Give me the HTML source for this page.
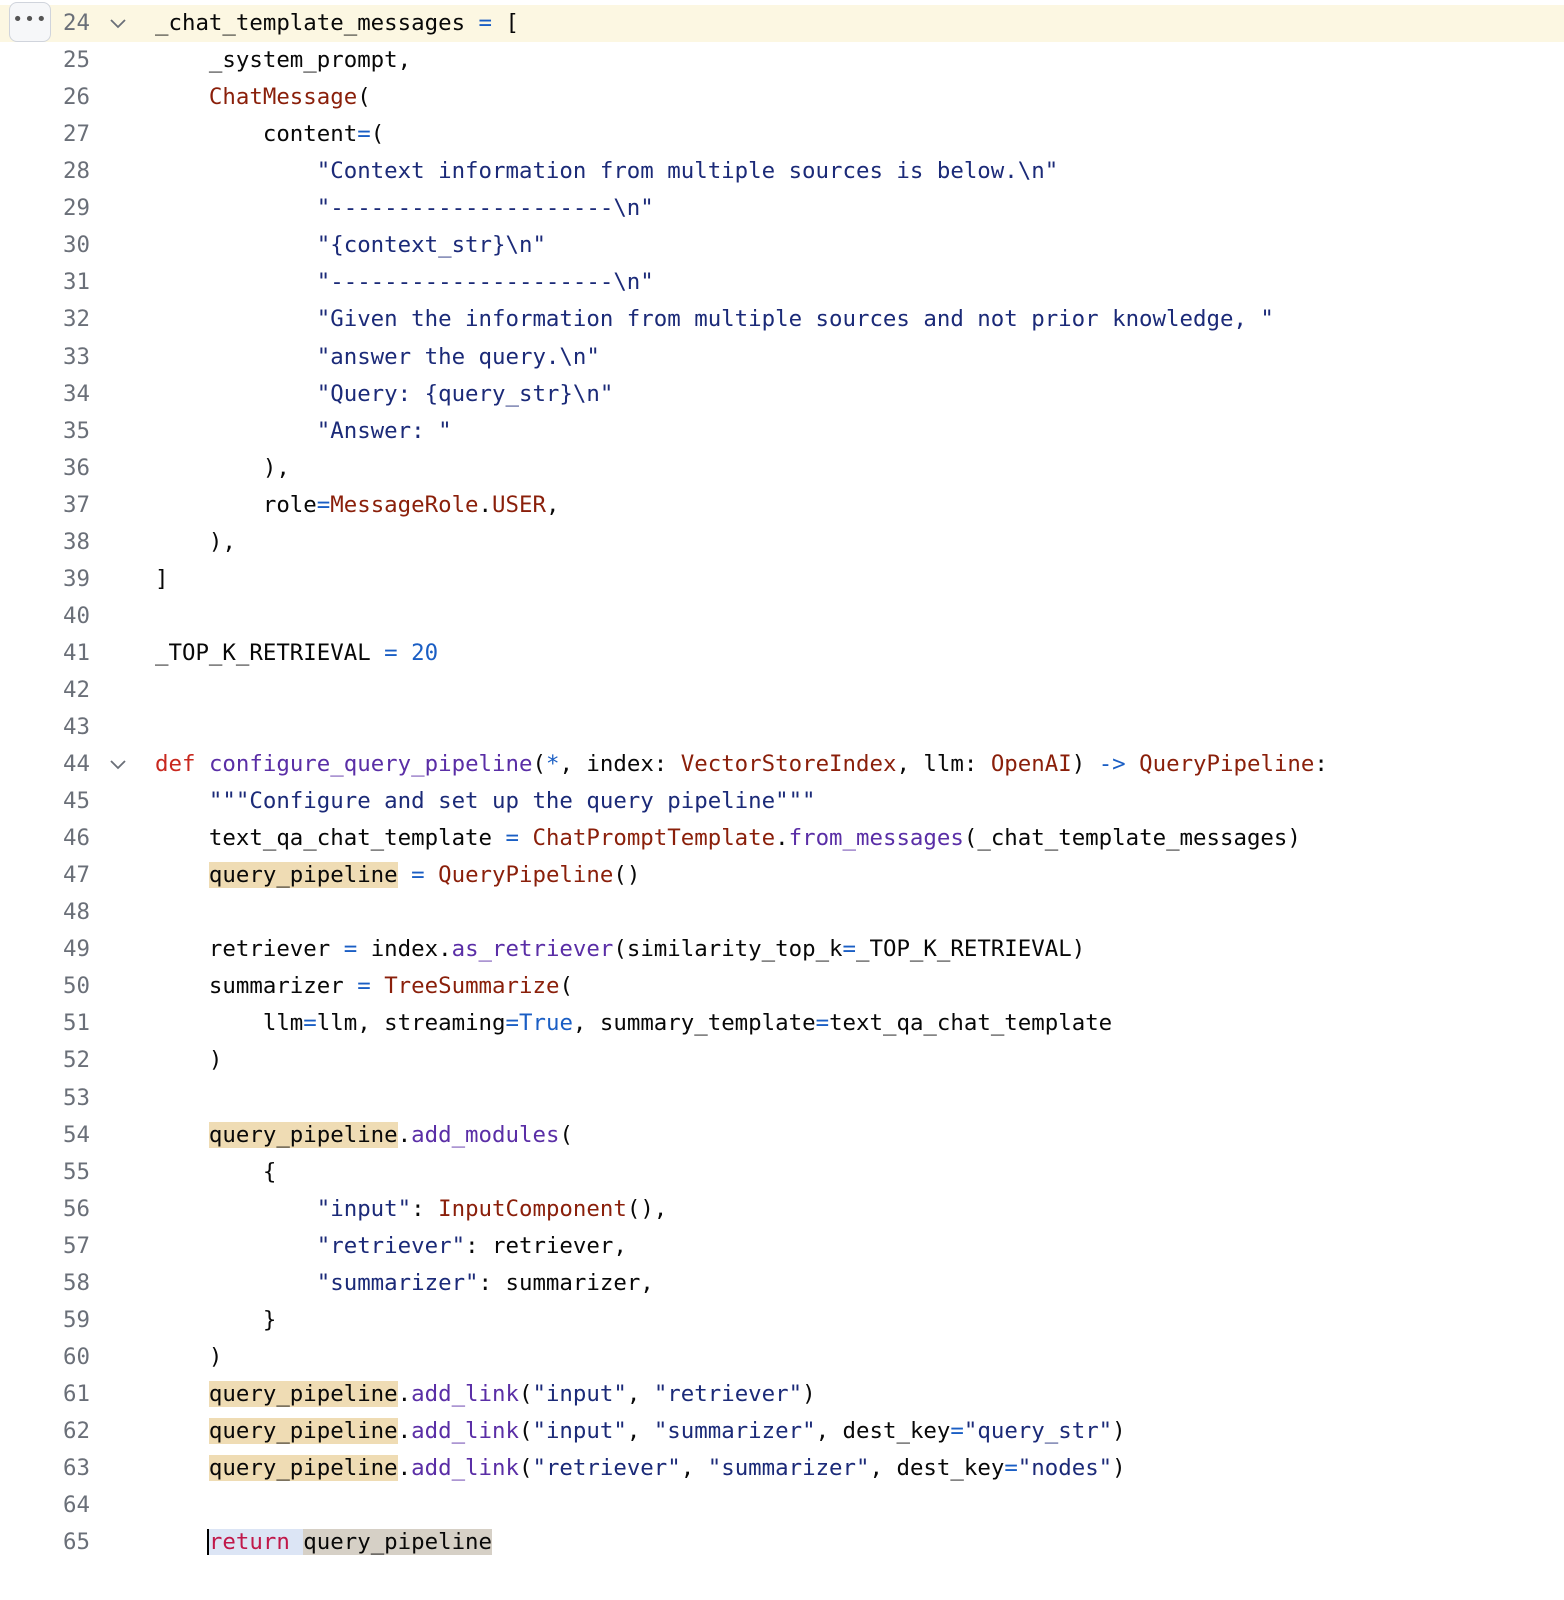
<!DOCTYPE html>
<html><head><meta charset="utf-8"><style>
body{margin:0;width:1564px;height:1600px;background:#fff;overflow:hidden;position:relative;font-family:"DejaVu Sans Mono","Liberation Mono",monospace;font-size:22.4px;color:#080808}
.l{position:absolute;left:0;width:1564px;height:37px;line-height:37px;white-space:pre}
.n{position:absolute;left:40px;width:50px;text-align:right;color:#6a6f78}
.c{position:absolute;left:155px}
.k{color:#c8281e}.t{color:#8a1f0a}.s{color:#1b2a78}.f{color:#5a2ea6}.o{color:#1a5ec4}.h{background:#efdcb4}
.chev{position:absolute;left:109px;top:12px;width:18px;height:12px}
</style></head><body>
<div style="position:absolute;left:0;top:5px;width:1564px;height:37px;background:#fcf7e2"></div>
<div style="position:absolute;left:9px;top:2px;width:42px;height:40px;border:1.5px solid #d0d4dc;border-radius:8px;background:#f6f7f9;box-sizing:border-box;color:#555;font-size:18px;line-height:34px;text-align:center;letter-spacing:1px">•••</div>
<div class="l" style="top:5px"><span class="n">24</span><svg class="chev" viewBox="0 0 18 12"><path d="M2 3 L9 10 L16 3" fill="none" stroke="#6a6f78" stroke-width="1.8"/></svg><span class="c">_chat_template_messages <span class="o">=</span> [</span></div>
<div class="l" style="top:42px"><span class="n">25</span><span class="c">    _system_prompt,</span></div>
<div class="l" style="top:79px"><span class="n">26</span><span class="c">    <span class="t">ChatMessage</span>(</span></div>
<div class="l" style="top:116px"><span class="n">27</span><span class="c">        content<span class="o">=</span>(</span></div>
<div class="l" style="top:153px"><span class="n">28</span><span class="c s">            "Context information from multiple sources is below.\n"</span></div>
<div class="l" style="top:190px"><span class="n">29</span><span class="c s">            "---------------------\n"</span></div>
<div class="l" style="top:227px"><span class="n">30</span><span class="c s">            "{context_str}\n"</span></div>
<div class="l" style="top:264px"><span class="n">31</span><span class="c s">            "---------------------\n"</span></div>
<div class="l" style="top:301px"><span class="n">32</span><span class="c s">            "Given the information from multiple sources and not prior knowledge, "</span></div>
<div class="l" style="top:339px"><span class="n">33</span><span class="c s">            "answer the query.\n"</span></div>
<div class="l" style="top:376px"><span class="n">34</span><span class="c s">            "Query: {query_str}\n"</span></div>
<div class="l" style="top:413px"><span class="n">35</span><span class="c s">            "Answer: "</span></div>
<div class="l" style="top:450px"><span class="n">36</span><span class="c">        ),</span></div>
<div class="l" style="top:487px"><span class="n">37</span><span class="c">        role<span class="o">=</span><span class="t">MessageRole</span>.<span class="t">USER</span>,</span></div>
<div class="l" style="top:524px"><span class="n">38</span><span class="c">    ),</span></div>
<div class="l" style="top:561px"><span class="n">39</span><span class="c">]</span></div>
<div class="l" style="top:598px"><span class="n">40</span></div>
<div class="l" style="top:635px"><span class="n">41</span><span class="c">_TOP_K_RETRIEVAL <span class="o">=</span> <span class="o">20</span></span></div>
<div class="l" style="top:672px"><span class="n">42</span></div>
<div class="l" style="top:709px"><span class="n">43</span></div>
<div class="l" style="top:746px"><span class="n">44</span><svg class="chev" viewBox="0 0 18 12"><path d="M2 3 L9 10 L16 3" fill="none" stroke="#6a6f78" stroke-width="1.8"/></svg><span class="c"><span class="k">def</span> <span class="f">configure_query_pipeline</span>(<span class="o">*</span>, index: <span class="t">VectorStoreIndex</span>, llm: <span class="t">OpenAI</span>) <span class="o">-&gt;</span> <span class="t">QueryPipeline</span>:</span></div>
<div class="l" style="top:783px"><span class="n">45</span><span class="c s">    """Configure and set up the query pipeline"""</span></div>
<div class="l" style="top:820px"><span class="n">46</span><span class="c">    text_qa_chat_template <span class="o">=</span> <span class="t">ChatPromptTemplate</span>.<span class="f">from_messages</span>(_chat_template_messages)</span></div>
<div class="l" style="top:857px"><span class="n">47</span><span class="c">    <span class="h">query_pipeline</span> <span class="o">=</span> <span class="t">QueryPipeline</span>()</span></div>
<div class="l" style="top:894px"><span class="n">48</span></div>
<div class="l" style="top:931px"><span class="n">49</span><span class="c">    retriever <span class="o">=</span> index.<span class="f">as_retriever</span>(similarity_top_k<span class="o">=</span>_TOP_K_RETRIEVAL)</span></div>
<div class="l" style="top:968px"><span class="n">50</span><span class="c">    summarizer <span class="o">=</span> <span class="t">TreeSummarize</span>(</span></div>
<div class="l" style="top:1005px"><span class="n">51</span><span class="c">        llm<span class="o">=</span>llm, streaming<span class="o">=</span><span class="o">True</span>, summary_template<span class="o">=</span>text_qa_chat_template</span></div>
<div class="l" style="top:1042px"><span class="n">52</span><span class="c">    )</span></div>
<div class="l" style="top:1080px"><span class="n">53</span></div>
<div class="l" style="top:1117px"><span class="n">54</span><span class="c">    <span class="h">query_pipeline</span>.<span class="f">add_modules</span>(</span></div>
<div class="l" style="top:1154px"><span class="n">55</span><span class="c">        {</span></div>
<div class="l" style="top:1191px"><span class="n">56</span><span class="c">            <span class="s">"input"</span>: <span class="t">InputComponent</span>(),</span></div>
<div class="l" style="top:1228px"><span class="n">57</span><span class="c">            <span class="s">"retriever"</span>: retriever,</span></div>
<div class="l" style="top:1265px"><span class="n">58</span><span class="c">            <span class="s">"summarizer"</span>: summarizer,</span></div>
<div class="l" style="top:1302px"><span class="n">59</span><span class="c">        }</span></div>
<div class="l" style="top:1339px"><span class="n">60</span><span class="c">    )</span></div>
<div class="l" style="top:1376px"><span class="n">61</span><span class="c">    <span class="h">query_pipeline</span>.<span class="f">add_link</span>(<span class="s">"input"</span>, <span class="s">"retriever"</span>)</span></div>
<div class="l" style="top:1413px"><span class="n">62</span><span class="c">    <span class="h">query_pipeline</span>.<span class="f">add_link</span>(<span class="s">"input"</span>, <span class="s">"summarizer"</span>, dest_key<span class="o">=</span><span class="s">"query_str"</span>)</span></div>
<div class="l" style="top:1450px"><span class="n">63</span><span class="c">    <span class="h">query_pipeline</span>.<span class="f">add_link</span>(<span class="s">"retriever"</span>, <span class="s">"summarizer"</span>, dest_key<span class="o">=</span><span class="s">"nodes"</span>)</span></div>
<div class="l" style="top:1487px"><span class="n">64</span></div>
<div class="l" style="top:1524px"><span class="n">65</span><span class="c">    <span style="background:#dce5f5;color:#c0184a;border-left:2px solid #000;margin-left:-2px">return </span><span style="background:#d6d0c6">query_pipeline</span></span></div>
</body></html>
